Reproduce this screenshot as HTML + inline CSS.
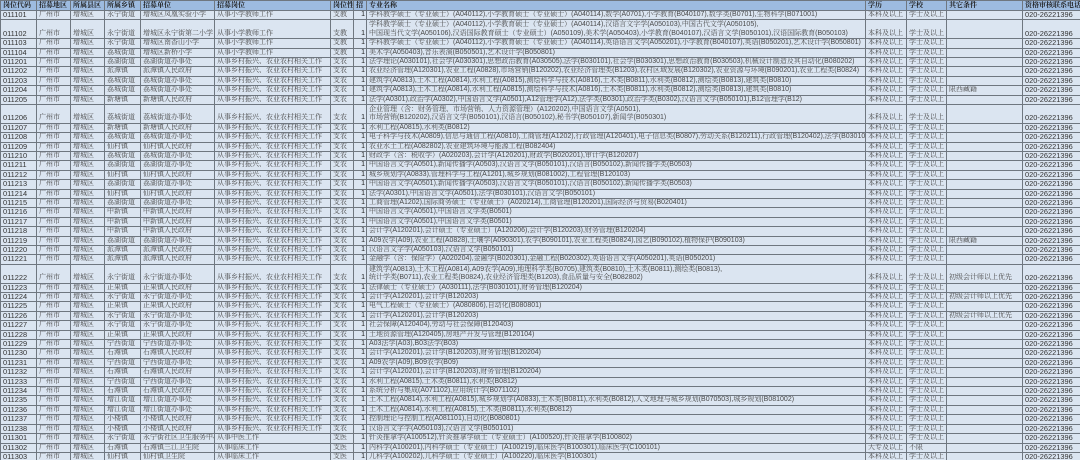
<!DOCTYPE html>
<html><head><meta charset="utf-8"><style>
html,body{margin:0;padding:0;background:#dbe5f1;width:1080px;height:460px;overflow:hidden}
table{border-collapse:collapse;table-layout:fixed;width:1080px;font-family:"Liberation Sans","Noto Serif CJK SC",serif;font-size:7px;color:#4a4a4a}
td,th{border:1px solid #6f7780;padding:0 0 0 2px;white-space:nowrap;overflow:hidden;height:8.4px;line-height:8.4px;vertical-align:bottom;background:#dbe5f1}
th{background:#9dbbe0;color:#222;text-align:left;font-weight:bold;height:9px;line-height:9px;font-family:"Liberation Serif","Noto Serif CJK SC",serif}
tr.d td{height:17.75px}
td.n{text-align:right;padding:0 1px 0 0;color:#222}
td.c{color:#333;font-size:7.4px}
</style></head><body>
<table>
<colgroup><col style="width:36px"><col style="width:34px"><col style="width:34px"><col style="width:36px"><col style="width:74px"><col style="width:116px"><col style="width:23px"><col style="width:13px"><col style="width:499px"><col style="width:41px"><col style="width:40px"><col style="width:76px"><col style="width:58px"></colgroup>
<tr><th>岗位代码</th><th>招募地区</th><th>所属县区</th><th>所属乡镇</th><th>招募单位</th><th>招募岗位</th><th>岗位性</th><th>招</th><th>专业名称</th><th>学历</th><th>学校</th><th>其它条件</th><th>资格审核联系电话</th></tr>
<tr><td class="c">011101</td><td>广州市</td><td>增城区</td><td>永宁街道</td><td>增城区凤凰实验小学</td><td>从事小学教师工作</td><td>支教</td><td class="n">1</td><td>学科教学硕士（专业硕士）(A040112),小学教育硕士（专业硕士）(A040114),数学(A0701),小学教育(B040107),数学类(B0701),生物科学(B071001)</td><td>本科及以上</td><td>学士及以上</td><td></td><td class="c">020-26221396</td></tr>
<tr class="d"><td class="c">011102</td><td>广州市</td><td>增城区</td><td>永宁街道</td><td>增城区永宁街第二小学</td><td>从事小学教师工作</td><td>支教</td><td class="n">1</td><td>学科教学硕士（专业硕士）(A040112),小学教育硕士（专业硕士）(A040114),汉语言文字学(A050103),中国古代文学(A050105),<br>中国现当代文学(A050106),汉语国际教育硕士（专业硕士）(A050109),美术学(A050403),小学教育(B040107),汉语言文学(B050101),汉语国际教育(B050103)</td><td>本科及以上</td><td>学士及以上</td><td></td><td class="c">020-26221396</td></tr>
<tr><td class="c">011103</td><td>广州市</td><td>增城区</td><td>永宁街道</td><td>增城区南香山小学</td><td>从事小学教师工作</td><td>支教</td><td class="n">1</td><td>学科教学硕士（专业硕士）(A040112),小学教育硕士（专业硕士）(A040114),英语语言文学(A050201),小学教育(B040107),英语(B050201),艺术设计学(B050801)</td><td>本科及以上</td><td>学士及以上</td><td></td><td class="c">020-26221396</td></tr>
<tr><td class="c">011104</td><td>广州市</td><td>增城区</td><td>荔城街道</td><td>增城区新桥小学</td><td>从事小学教师工作</td><td>支教</td><td class="n">1</td><td>美术学(A050403),音乐表演(B050501),艺术设计学(B050801)</td><td>本科及以上</td><td>学士及以上</td><td></td><td class="c">020-26221396</td></tr>
<tr><td class="c">011201</td><td>广州市</td><td>增城区</td><td>荔湖街道</td><td>荔湖街道办事处</td><td>从事乡村振兴、农业农村相关工作</td><td>支农</td><td class="n">1</td><td>法学理论(A030101),社会学(A030301),思想政治教育(A030505),法学(B030101),社会学(B030301),思想政治教育(B030503),机械设计制造及其自动化(B080202)</td><td>本科及以上</td><td>学士及以上</td><td></td><td class="c">020-26221396</td></tr>
<tr><td class="c">011202</td><td>广州市</td><td>增城区</td><td>派潭镇</td><td>派潭镇人民政府</td><td>从事乡村振兴、农业农村相关工作</td><td>支农</td><td class="n">1</td><td>农业经济管理(A120301),农业工程(A0828),市场营销(B120202),农业经济管理类(B1203),农村区域发展(B120302),农业资源与环境(B090201),农业工程类(B0824)</td><td>本科及以上</td><td>学士及以上</td><td></td><td class="c">020-26221396</td></tr>
<tr><td class="c">011203</td><td>广州市</td><td>增城区</td><td>荔城街道</td><td>荔城街道办事处</td><td>从事乡村振兴、农业农村相关工作</td><td>支农</td><td class="n">1</td><td>建筑学(A0813),土木工程(A0814),水利工程(A0815),测绘科学与技术(A0816),土木类(B0811),水利类(B0812),测绘类(B0813),建筑类(B0810)</td><td>本科及以上</td><td>学士及以上</td><td></td><td class="c">020-26221396</td></tr>
<tr><td class="c">011204</td><td>广州市</td><td>增城区</td><td>荔城街道</td><td>荔城街道办事处</td><td>从事乡村振兴、农业农村相关工作</td><td>支农</td><td class="n">1</td><td>建筑学(A0813),土木工程(A0814),水利工程(A0815),测绘科学与技术(A0816),土木类(B0811),水利类(B0812),测绘类(B0813),建筑类(B0810)</td><td>本科及以上</td><td>学士及以上</td><td>限西藏籍</td><td class="c">020-26221396</td></tr>
<tr><td class="c">011205</td><td>广州市</td><td>增城区</td><td>新塘镇</td><td>新塘镇人民政府</td><td>从事乡村振兴、农业农村相关工作</td><td>支农</td><td class="n">1</td><td>法学(A0301),政治学(A0302),中国语言文学(A0501),A12管理学(A12),法学类(B0301),政治学类(B0302),汉语言文学(B050101),B12管理学(B12)</td><td>本科及以上</td><td>学士及以上</td><td></td><td class="c">020-26221396</td></tr>
<tr class="d"><td class="c">011206</td><td>广州市</td><td>增城区</td><td>荔城街道</td><td>荔城街道办事处</td><td>从事乡村振兴、农业农村相关工作</td><td>支农</td><td class="n">1</td><td>企业管理（含：财务管理、市场营销、人力资源管理）(A120202),中国语言文学(A0501),<br>市场营销(B120202),汉语言文学(B050101),汉语言(B050102),秘书学(B050107),新闻学(B050301)</td><td>本科及以上</td><td>学士及以上</td><td></td><td class="c">020-26221396</td></tr>
<tr><td class="c">011207</td><td>广州市</td><td>增城区</td><td>新塘镇</td><td>新塘镇人民政府</td><td>从事乡村振兴、农业农村相关工作</td><td>支农</td><td class="n">1</td><td>水利工程(A0815),水利类(B0812)</td><td>本科及以上</td><td>学士及以上</td><td></td><td class="c">020-26221396</td></tr>
<tr><td class="c">011208</td><td>广州市</td><td>增城区</td><td>荔城街道</td><td>荔城街道办事处</td><td>从事乡村振兴、农业农村相关工作</td><td>支农</td><td class="n">1</td><td>电子科学与技术(A0809),信息与通信工程(A0810),工商管理(A1202),行政管理(A120401),电子信息类(B0807),劳动关系(B120211),行政管理(B120402),法学(B030101)</td><td>本科及以上</td><td>学士及以上</td><td></td><td class="c">020-26221396</td></tr>
<tr><td class="c">011209</td><td>广州市</td><td>增城区</td><td>仙村镇</td><td>仙村镇人民政府</td><td>从事乡村振兴、农业农村相关工作</td><td>支农</td><td class="n">1</td><td>农业水土工程(A082802),农业建筑环境与能源工程(B082404)</td><td>本科及以上</td><td>学士及以上</td><td></td><td class="c">020-26221396</td></tr>
<tr><td class="c">011210</td><td>广州市</td><td>增城区</td><td>荔城街道</td><td>荔城街道办事处</td><td>从事乡村振兴、农业农村相关工作</td><td>支农</td><td class="n">1</td><td>财政学（含：税收学）(A020203),会计学(A120201),财政学(B020201),审计学(B120207)</td><td>本科及以上</td><td>学士及以上</td><td></td><td class="c">020-26221396</td></tr>
<tr><td class="c">011211</td><td>广州市</td><td>增城区</td><td>荔湖街道</td><td>荔湖街道办事处</td><td>从事乡村振兴、农业农村相关工作</td><td>支农</td><td class="n">1</td><td>中国语言文学(A0501),新闻传播学(A0503),汉语言文学(B050101),汉语言(B050102),新闻传播学类(B0503)</td><td>本科及以上</td><td>学士及以上</td><td></td><td class="c">020-26221396</td></tr>
<tr><td class="c">011212</td><td>广州市</td><td>增城区</td><td>仙村镇</td><td>仙村镇人民政府</td><td>从事乡村振兴、农业农村相关工作</td><td>支农</td><td class="n">1</td><td>城乡规划学(A0833),管理科学与工程(A1201),城乡规划(B081002),工程管理(B120103)</td><td>本科及以上</td><td>学士及以上</td><td></td><td class="c">020-26221396</td></tr>
<tr><td class="c">011213</td><td>广州市</td><td>增城区</td><td>荔湖街道</td><td>荔湖街道办事处</td><td>从事乡村振兴、农业农村相关工作</td><td>支农</td><td class="n">1</td><td>中国语言文学(A0501),新闻传播学(A0503),汉语言文学(B050101),汉语言(B050102),新闻传播学类(B0503)</td><td>本科及以上</td><td>学士及以上</td><td></td><td class="c">020-26221396</td></tr>
<tr><td class="c">011214</td><td>广州市</td><td>增城区</td><td>仙村镇</td><td>仙村镇人民政府</td><td>从事乡村振兴、农业农村相关工作</td><td>支农</td><td class="n">1</td><td>法学(A0301),中国语言文学(A0501),法学(B030101),汉语言文学(B050101)</td><td>本科及以上</td><td>学士及以上</td><td></td><td class="c">020-26221396</td></tr>
<tr><td class="c">011215</td><td>广州市</td><td>增城区</td><td>荔湖街道</td><td>荔湖街道办事处</td><td>从事乡村振兴、农业农村相关工作</td><td>支农</td><td class="n">1</td><td>工商管理(A1202),国际商务硕士（专业硕士）(A020214),工商管理(B120201),国际经济与贸易(B020401)</td><td>本科及以上</td><td>学士及以上</td><td></td><td class="c">020-26221396</td></tr>
<tr><td class="c">011216</td><td>广州市</td><td>增城区</td><td>中新镇</td><td>中新镇人民政府</td><td>从事乡村振兴、农业农村相关工作</td><td>支农</td><td class="n">1</td><td>中国语言文学(A0501),中国语言文学类(B0501)</td><td>本科及以上</td><td>学士及以上</td><td></td><td class="c">020-26221396</td></tr>
<tr><td class="c">011217</td><td>广州市</td><td>增城区</td><td>中新镇</td><td>中新镇人民政府</td><td>从事乡村振兴、农业农村相关工作</td><td>支农</td><td class="n">1</td><td>中国语言文学(A0501),中国语言文学类(B0501)</td><td>本科及以上</td><td>学士及以上</td><td></td><td class="c">020-26221396</td></tr>
<tr><td class="c">011218</td><td>广州市</td><td>增城区</td><td>中新镇</td><td>中新镇人民政府</td><td>从事乡村振兴、农业农村相关工作</td><td>支农</td><td class="n">1</td><td>会计学(A120201),会计硕士（专业硕士）(A120206),会计学(B120203),财务管理(B120204)</td><td>本科及以上</td><td>学士及以上</td><td></td><td class="c">020-26221396</td></tr>
<tr><td class="c">011219</td><td>广州市</td><td>增城区</td><td>荔湖街道</td><td>荔湖街道办事处</td><td>从事乡村振兴、农业农村相关工作</td><td>支农</td><td class="n">1</td><td>A09农学(A09),农业工程(A0828),土壤学(A090301),农学(B090101),农业工程类(B0824),园艺(B090102),植物保护(B090103)</td><td>本科及以上</td><td>学士及以上</td><td>限西藏籍</td><td class="c">020-26221396</td></tr>
<tr><td class="c">011220</td><td>广州市</td><td>增城区</td><td>派潭镇</td><td>派潭镇人民政府</td><td>从事乡村振兴、农业农村相关工作</td><td>支农</td><td class="n">1</td><td>汉语言文字学(A050103),汉语言文学(B050101)</td><td>本科及以上</td><td>学士及以上</td><td></td><td class="c">020-26221396</td></tr>
<tr><td class="c">011221</td><td>广州市</td><td>增城区</td><td>派潭镇</td><td>派潭镇人民政府</td><td>从事乡村振兴、农业农村相关工作</td><td>支农</td><td class="n">1</td><td>金融学（含：保险学）(A020204),金融学(B020301),金融工程(B020302),英语语言文学(A050201),英语(B050201)</td><td>本科及以上</td><td>学士及以上</td><td></td><td class="c">020-26221396</td></tr>
<tr class="d"><td class="c">011222</td><td>广州市</td><td>增城区</td><td>永宁街道</td><td>永宁街道办事处</td><td>从事乡村振兴、农业农村相关工作</td><td>支农</td><td class="n">1</td><td>建筑学(A0813),土木工程(A0814),A09农学(A09),地理科学类(B0705),建筑类(B0810),土木类(B0811),测绘类(B0813),<br>统计学类(B0711),农业工程类(B0824),农业经济管理类(B1203),食品质量与安全(B082802)</td><td>本科及以上</td><td>学士及以上</td><td>初级会计师以上优先</td><td class="c">020-26221396</td></tr>
<tr><td class="c">011223</td><td>广州市</td><td>增城区</td><td>正果镇</td><td>正果镇人民政府</td><td>从事乡村振兴、农业农村相关工作</td><td>支农</td><td class="n">1</td><td>法律硕士（专业硕士）(A030111),法学(B030101),财务管理(B120204)</td><td>本科及以上</td><td>学士及以上</td><td></td><td class="c">020-26221396</td></tr>
<tr><td class="c">011224</td><td>广州市</td><td>增城区</td><td>永宁街道</td><td>永宁街道办事处</td><td>从事乡村振兴、农业农村相关工作</td><td>支农</td><td class="n">1</td><td>会计学(A120201),会计学(B120203)</td><td>本科及以上</td><td>学士及以上</td><td>初级会计师以上优先</td><td class="c">020-26221396</td></tr>
<tr><td class="c">011225</td><td>广州市</td><td>增城区</td><td>正果镇</td><td>正果镇人民政府</td><td>从事乡村振兴、农业农村相关工作</td><td>支农</td><td class="n">1</td><td>电气工程硕士（专业硕士）(A080806),自动化(B080801)</td><td>本科及以上</td><td>学士及以上</td><td></td><td class="c">020-26221396</td></tr>
<tr><td class="c">011226</td><td>广州市</td><td>增城区</td><td>永宁街道</td><td>永宁街道办事处</td><td>从事乡村振兴、农业农村相关工作</td><td>支农</td><td class="n">1</td><td>会计学(A120201),会计学(B120203)</td><td>本科及以上</td><td>学士及以上</td><td>初级会计师以上优先</td><td class="c">020-26221396</td></tr>
<tr><td class="c">011227</td><td>广州市</td><td>增城区</td><td>永宁街道</td><td>永宁街道办事处</td><td>从事乡村振兴、农业农村相关工作</td><td>支农</td><td class="n">1</td><td>社会保障(A120404),劳动与社会保障(B120403)</td><td>本科及以上</td><td>学士及以上</td><td></td><td class="c">020-26221396</td></tr>
<tr><td class="c">011228</td><td>广州市</td><td>增城区</td><td>正果镇</td><td>正果镇人民政府</td><td>从事乡村振兴、农业农村相关工作</td><td>支农</td><td class="n">1</td><td>土地资源管理(A120405),房地产开发与管理(B120104)</td><td>本科及以上</td><td>学士及以上</td><td></td><td class="c">020-26221396</td></tr>
<tr><td class="c">011229</td><td>广州市</td><td>增城区</td><td>宁西街道</td><td>宁西街道办事处</td><td>从事乡村振兴、农业农村相关工作</td><td>支农</td><td class="n">1</td><td>A03法学(A03),B03法学(B03)</td><td>本科及以上</td><td>学士及以上</td><td></td><td class="c">020-26221396</td></tr>
<tr><td class="c">011230</td><td>广州市</td><td>增城区</td><td>石滩镇</td><td>石滩镇人民政府</td><td>从事乡村振兴、农业农村相关工作</td><td>支农</td><td class="n">1</td><td>会计学(A120201),会计学(B120203),财务管理(B120204)</td><td>本科及以上</td><td>学士及以上</td><td></td><td class="c">020-26221396</td></tr>
<tr><td class="c">011231</td><td>广州市</td><td>增城区</td><td>宁西街道</td><td>宁西街道办事处</td><td>从事乡村振兴、农业农村相关工作</td><td>支农</td><td class="n">1</td><td>A09农学(A09),B09农学(B09)</td><td>本科及以上</td><td>学士及以上</td><td></td><td class="c">020-26221396</td></tr>
<tr><td class="c">011232</td><td>广州市</td><td>增城区</td><td>石滩镇</td><td>石滩镇人民政府</td><td>从事乡村振兴、农业农村相关工作</td><td>支农</td><td class="n">1</td><td>会计学(A120201),会计学(B120203),财务管理(B120204)</td><td>本科及以上</td><td>学士及以上</td><td></td><td class="c">020-26221396</td></tr>
<tr><td class="c">011233</td><td>广州市</td><td>增城区</td><td>宁西街道</td><td>宁西街道办事处</td><td>从事乡村振兴、农业农村相关工作</td><td>支农</td><td class="n">1</td><td>水利工程(A0815),土木类(B0811),水利类(B0812)</td><td>本科及以上</td><td>学士及以上</td><td></td><td class="c">020-26221396</td></tr>
<tr><td class="c">011234</td><td>广州市</td><td>增城区</td><td>石滩镇</td><td>石滩镇人民政府</td><td>从事乡村振兴、农业农村相关工作</td><td>支农</td><td class="n">1</td><td>系统分析与集成(A071102),应用统计学(B071102)</td><td>本科及以上</td><td>学士及以上</td><td></td><td class="c">020-26221396</td></tr>
<tr><td class="c">011235</td><td>广州市</td><td>增城区</td><td>增江街道</td><td>增江街道办事处</td><td>从事乡村振兴、农业农村相关工作</td><td>支农</td><td class="n">1</td><td>土木工程(A0814),水利工程(A0815),城乡规划学(A0833),土木类(B0811),水利类(B0812),人文地理与城乡规划(B070503),城乡规划(B081002)</td><td>本科及以上</td><td>学士及以上</td><td></td><td class="c">020-26221396</td></tr>
<tr><td class="c">011236</td><td>广州市</td><td>增城区</td><td>增江街道</td><td>增江街道办事处</td><td>从事乡村振兴、农业农村相关工作</td><td>支农</td><td class="n">1</td><td>土木工程(A0814),水利工程(A0815),土木类(B0811),水利类(B0812)</td><td>本科及以上</td><td>学士及以上</td><td></td><td class="c">020-26221396</td></tr>
<tr><td class="c">011237</td><td>广州市</td><td>增城区</td><td>小楼镇</td><td>小楼镇人民政府</td><td>从事乡村振兴、农业农村相关工作</td><td>支农</td><td class="n">1</td><td>控制理论与控制工程(A081101),自动化(B080801)</td><td>本科及以上</td><td>学士及以上</td><td></td><td class="c">020-26221396</td></tr>
<tr><td class="c">011238</td><td>广州市</td><td>增城区</td><td>小楼镇</td><td>小楼镇人民政府</td><td>从事乡村振兴、农业农村相关工作</td><td>支农</td><td class="n">1</td><td>汉语言文字学(A050103),汉语言文学(B050101)</td><td>本科及以上</td><td>学士及以上</td><td></td><td class="c">020-26221396</td></tr>
<tr><td class="c">011301</td><td>广州市</td><td>增城区</td><td>永宁街道</td><td>永宁街社区卫生服务中心</td><td>从事中医工作</td><td>支医</td><td class="n">1</td><td>针灸推拿学(A100512),针灸推拿学硕士（专业硕士）(A100520),针灸推拿学(B100802)</td><td>本科及以上</td><td>学士及以上</td><td></td><td class="c">020-26221396</td></tr>
<tr><td class="c">011302</td><td>广州市</td><td>增城区</td><td>石滩镇</td><td>石滩镇三江卫生院</td><td>从事临床工作</td><td>支医</td><td class="n">1</td><td>内科学(A100201),内科学硕士（专业硕士）(A100219),临床医学(B100301),临床医学(C100101)</td><td>大专及以上</td><td>不限</td><td></td><td class="c">020-26221396</td></tr>
<tr><td class="c">011303</td><td>广州市</td><td>增城区</td><td>仙村镇</td><td>仙村镇卫生院</td><td>从事临床工作</td><td>支医</td><td class="n">1</td><td>儿科学(A100202),儿科学硕士（专业硕士）(A100220),临床医学(B100301)</td><td>本科及以上</td><td>学士及以上</td><td></td><td class="c">020-26221396</td></tr>
</table>
</body></html>
